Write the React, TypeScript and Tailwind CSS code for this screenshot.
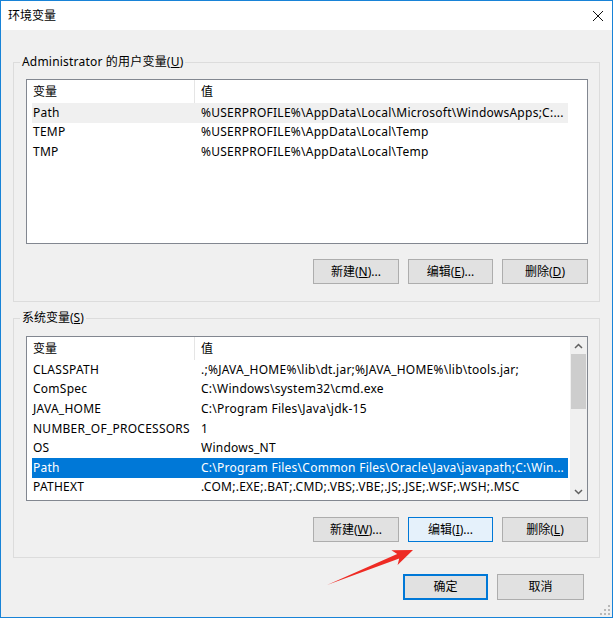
import React from "react";

type Row = { name: string; value: string };

const userRows: Row[] = [
  { name: "Path", value: "%USERPROFILE%\\AppData\\Local\\Microsoft\\WindowsApps;C:..." },
  { name: "TEMP", value: "%USERPROFILE%\\AppData\\Local\\Temp" },
  { name: "TMP", value: "%USERPROFILE%\\AppData\\Local\\Temp" },
];

const sysRows: Row[] = [
  { name: "CLASSPATH", value: ".;%JAVA_HOME%\\lib\\dt.jar;%JAVA_HOME%\\lib\\tools.jar;" },
  { name: "ComSpec", value: "C:\\Windows\\system32\\cmd.exe" },
  { name: "JAVA_HOME", value: "C:\\Program Files\\Java\\jdk-15" },
  { name: "NUMBER_OF_PROCESSORS", value: "1" },
  { name: "OS", value: "Windows_NT" },
  { name: "Path", value: "C:\\Program Files\\Common Files\\Oracle\\Java\\javapath;C:\\Win..." },
  { name: "PATHEXT", value: ".COM;.EXE;.BAT;.CMD;.VBS;.VBE;.JS;.JSE;.WSF;.WSH;.MSC" },
];

function ListView({
  rows,
  grayIndex,
  blueIndex,
  scroll,
}: {
  rows: Row[];
  grayIndex?: number;
  blueIndex?: number;
  scroll?: boolean;
}) {
  return (
    <div className="h-[165px] border border-[#828790] bg-white flex overflow-hidden">
      <div className="flex-1 flex flex-col min-w-0">
        <div className="h-[23px] flex shrink-0">
          <div className="w-[168px] pl-[6px] h-full flex items-center border-r border-[#e5e5e5]">变量</div>
          <div className="pl-[6px] flex items-center">值</div>
        </div>
        {rows.map((r, i) => {
          const gray = i === grayIndex;
          const blue = i === blueIndex;
          return (
            <div
              key={i}
              className={
                "ml-[5px] w-[536px] h-[19.6px] shrink-0 flex items-center whitespace-nowrap overflow-hidden tracking-[0.25px] " +
                (gray ? "bg-[#f0f0f0] " : "") +
                (blue ? "bg-[#0078d7] text-white " : "text-[#000]")
              }
            >
              <div className="w-[169px] pl-[1px] overflow-hidden shrink-0">{r.name}</div>
              <div className="overflow-hidden">{r.value}</div>
            </div>
          );
        })}
      </div>
      {scroll && (
        <div className="w-[17px] shrink-0 bg-[#f0f0f0] flex flex-col">
          <div className="h-[17px] flex items-center justify-center">
            <svg width="9" height="6" viewBox="0 0 9 6">
              <polyline points="1,5 4.5,1.5 8,5" fill="none" stroke="#606060" strokeWidth="1.5" />
            </svg>
          </div>
          <div className="h-[55px] mx-[1px] bg-[#cdcdcd]" />
          <div className="flex-1" />
          <div className="h-[17px] flex items-center justify-center">
            <svg width="9" height="6" viewBox="0 0 9 6">
              <polyline points="1,1 4.5,4.5 8,1" fill="none" stroke="#606060" strokeWidth="1.5" />
            </svg>
          </div>
        </div>
      )}
    </div>
  );
}

function Btn({
  children,
  w,
  kind = "normal",
}: {
  children: React.ReactNode;
  w: string;
  kind?: "normal" | "hover" | "default";
}) {
  const cls =
    kind === "hover"
      ? "bg-[#e5f1fb] border border-[#0078d7]"
      : kind === "default"
      ? "bg-[#e1e1e1] border-2 border-[#0078d7]"
      : "bg-[#e1e1e1] border border-[#adadad]";
  return <div className={`${w} h-full flex items-center justify-center ${cls}`}>{children}</div>;
}

export default function App() {
  return (
    <div className="relative w-[613px] h-[618px] bg-[#f0f0f0] border border-[#1883d7] text-[12px] text-black font-['Noto_Sans','Noto_Sans_CJK_SC',sans-serif] leading-[16px] flex flex-col overflow-hidden">
      {/* title bar */}
      <div className="h-[29px] bg-white flex items-center justify-between pl-[7px] pr-[8px] shrink-0">
        <span>环境变量</span>
        <svg width="12" height="12" viewBox="0 0 12 12">
          <line x1="1" y1="1" x2="11" y2="11" stroke="#111" strokeWidth="1" />
          <line x1="11" y1="1" x2="1" y2="11" stroke="#111" strokeWidth="1" />
        </svg>
      </div>

      {/* user variables */}
      <fieldset className="mx-[12px] mt-[24px] min-w-0 border border-[#dcdcdc] pl-[12px] pr-[11px] pt-[9px] pb-[17px]">
        <legend className="-ml-[6px] px-[2px] leading-[16px] tracking-[0.2px]">
          Administrator 的用户变量(<u>U</u>)
        </legend>
        <ListView rows={userRows} grayIndex={0} />
        <div className="mt-[15px] h-[25px] flex justify-end gap-[9px]">
          <Btn w="w-[86px]">
            新建(<u>N</u>)...
          </Btn>
          <Btn w="w-[85px]">
            编辑(<u>E</u>)...
          </Btn>
          <Btn w="w-[86px]">
            删除(<u>D</u>)
          </Btn>
        </div>
      </fieldset>

      {/* system variables */}
      <fieldset className="mx-[12px] mt-[8px] min-w-0 border border-[#dcdcdc] pl-[12px] pr-[11px] pt-[10px] pb-[15px]">
        <legend className="-ml-[6px] px-[2px] leading-[16px]">
          系统变量(<u>S</u>)
        </legend>
        <ListView rows={sysRows} blueIndex={5} scroll />
        <div className="mt-[16px] h-[25px] flex justify-end gap-[9px]">
          <Btn w="w-[86px]">
            新建(<u>W</u>)...
          </Btn>
          <Btn w="w-[85px]" kind="hover">
            编辑(<u>I</u>)...
          </Btn>
          <Btn w="w-[86px]">
            删除(<u>L</u>)
          </Btn>
        </div>
      </fieldset>

      {/* dialog buttons */}
      <div className="mt-[16px] h-[26px] flex justify-end gap-[9px] mr-[28px]">
        <Btn w="w-[85px]" kind="default">
          确定
        </Btn>
        <Btn w="w-[87px]">取消</Btn>
      </div>

      {/* resize grip */}
      <svg className="absolute right-[2px] bottom-[2px]" width="10" height="10" viewBox="0 0 10 10">
        <rect x="8" y="0" width="2" height="2" fill="#b8b8b8" />
        <rect x="4" y="4" width="2" height="2" fill="#b8b8b8" />
        <rect x="8" y="4" width="2" height="2" fill="#b8b8b8" />
        <rect x="0" y="8" width="2" height="2" fill="#b8b8b8" />
        <rect x="4" y="8" width="2" height="2" fill="#b8b8b8" />
        <rect x="8" y="8" width="2" height="2" fill="#b8b8b8" />
      </svg>

      {/* annotation arrow */}
      <svg className="absolute left-[-1px] top-[-1px] pointer-events-none" width="613" height="618" viewBox="0 0 613 618">
        <polygon
          points="327,585 397.2,553.9 391.4,550.3 413,550 397.6,565.1 399.2,558.5"
          fill="#ee2b24"
        />
      </svg>
    </div>
  );
}
